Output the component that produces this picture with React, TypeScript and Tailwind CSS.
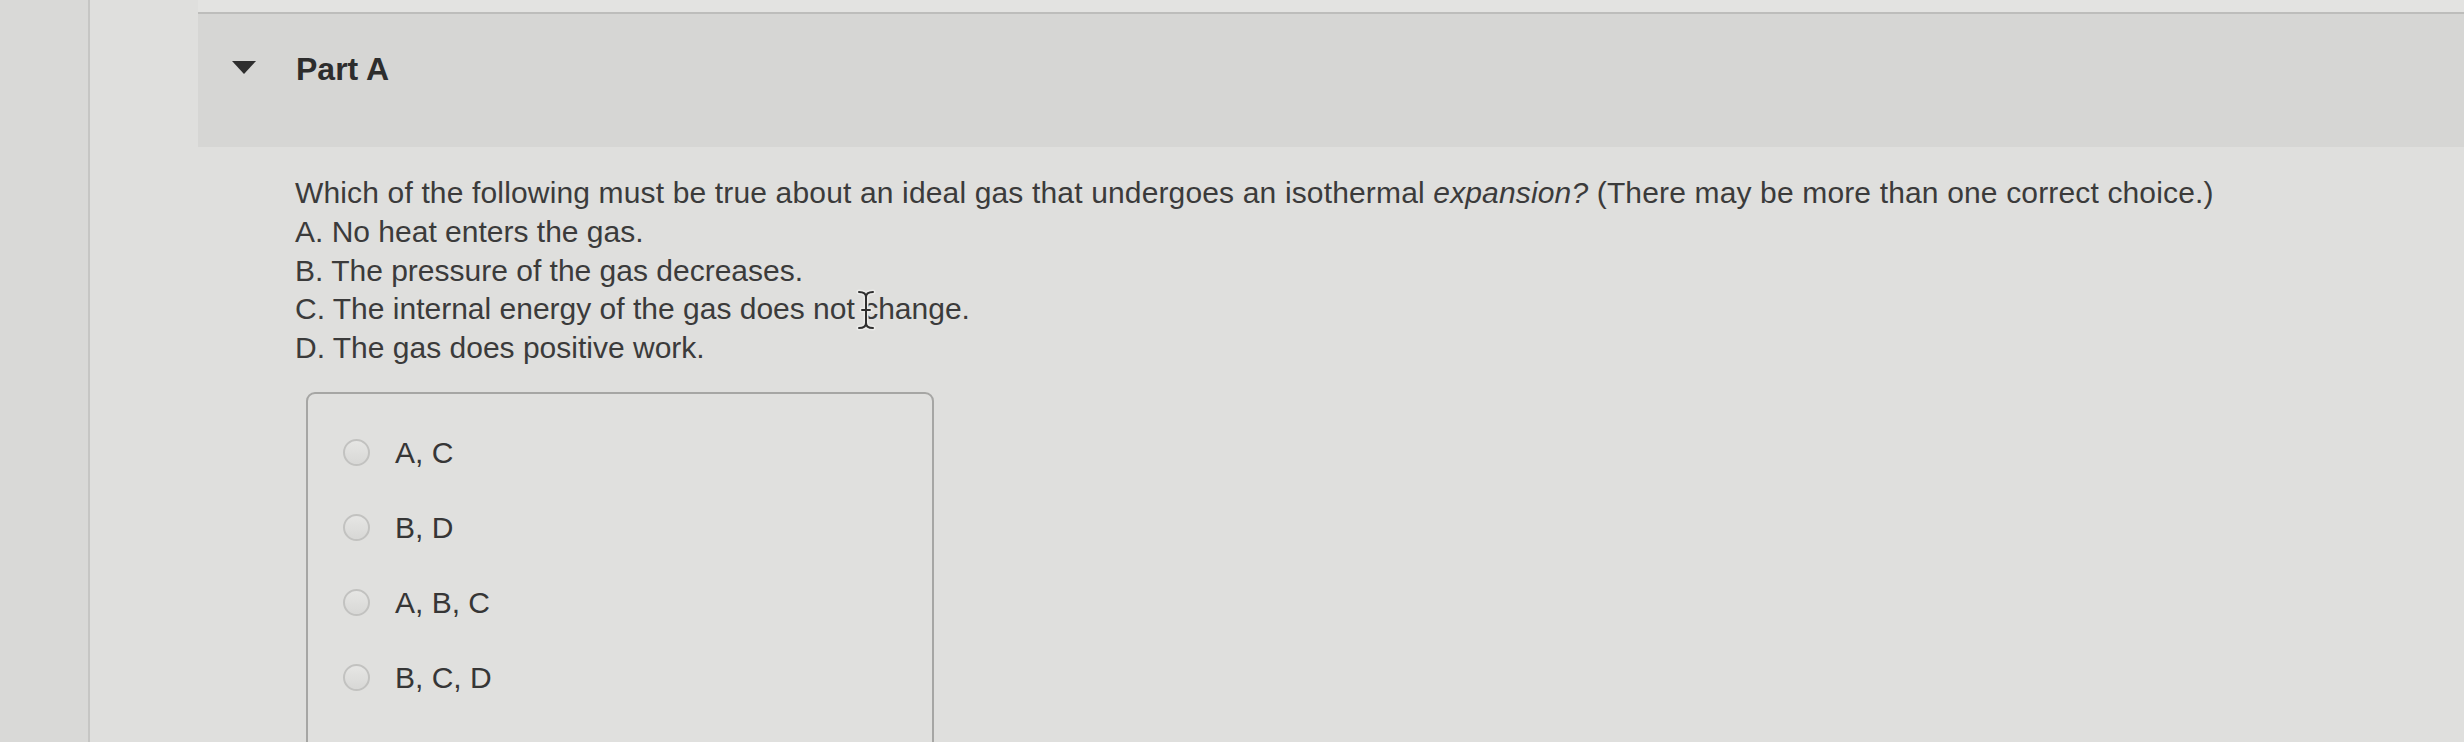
import React from "react";

const options = ["A, C", "B, D", "A, B, C", "B, C, D"];

function Radio() {
  return (
    <span className="block h-[27px] w-[27px] shrink-0 rounded-full border-2 border-[#c2c2c0] bg-gradient-to-b from-[#e6e6e4] to-[#d8d8d6]" />
  );
}

function IBeam() {
  // text cursor caught in the screenshot
  return (
    <svg
      className="pointer-events-none absolute left-[856px] top-[289px]"
      width="20"
      height="42"
      viewBox="0 0 20 42"
    >
      <path
        d="M3 3 Q10 3 10 8 L10 34 Q10 39 3 39 M17 3 Q10 3 10 8 M10 34 Q10 39 17 39 M6 21 L14 21"
        fill="none"
        stroke="#ececea"
        strokeWidth="5"
        strokeLinecap="round"
      />
      <path
        d="M3 3 Q10 3 10 8 L10 34 Q10 39 3 39 M17 3 Q10 3 10 8 M10 34 Q10 39 17 39 M6 21 L14 21"
        fill="none"
        stroke="#2f2f2f"
        strokeWidth="2"
        strokeLinecap="round"
      />
    </svg>
  );
}

export default function App() {
  return (
    <div
      className="relative flex h-[742px] w-[2464px] overflow-hidden bg-[#dededc] text-[#3b3b3b]"
      style={{ fontFamily: '"Liberation Sans", Arial, sans-serif' }}
    >
      {/* Left gutter */}
      <div className="w-[90px] shrink-0 border-r-2 border-[#c6c6c4] bg-[#d9d9d7]" />
      <div className="w-[108px] shrink-0 bg-[#dfdfdd]" />

      {/* Main */}
      <div className="flex min-w-0 flex-1 flex-col">
        <div className="h-[12px] shrink-0 bg-[#e3e3e1]" />
        <div className="flex h-[135px] shrink-0 items-start border-t-2 border-[#bdbdbb] bg-[#d6d6d4] pt-[36px]">
          <svg className="ml-[34px] mt-[11px]" width="24" height="13" viewBox="0 0 24 13">
            <path d="M0 0 L24 0 L12 13 Z" fill="#2e2e2e" />
          </svg>
          <span className="ml-[40px] text-[32px] font-bold leading-[38px] text-[#2d2d2d]">Part A</span>
        </div>

        <div className="flex min-h-0 flex-1 flex-col bg-[#dfdfdd] pl-[97px] pt-[27px]">
          <div className="shrink-0 text-[30px] leading-[38.8px]">
            <p className="tracking-[0.15px]">
              Which of the following must be true about an ideal gas that undergoes an isothermal{" "}
              <em>expansion?</em> (There may be more than one correct choice.)
            </p>
            <p>A. No heat enters the gas.</p>
            <p>B. The pressure of the gas decreases.</p>
            <p>C. The internal energy of the gas does not change.</p>
            <p>D. The gas does positive work.</p>
          </div>

          <div className="ml-[11px] mt-[24px] flex h-[360px] w-[628px] shrink-0 flex-col gap-[45px] rounded-[9px] border-2 border-[#a6a6a4] bg-[#e0e0de] pl-[35px] pt-[44px]">
            {options.map((opt) => (
              <label key={opt} className="flex h-[30px] items-center gap-[25px] text-[30px] text-[#363636]">
                <Radio />
                <span className="leading-[30px]">{opt}</span>
              </label>
            ))}
          </div>
        </div>
      </div>

      <IBeam />
    </div>
  );
}
